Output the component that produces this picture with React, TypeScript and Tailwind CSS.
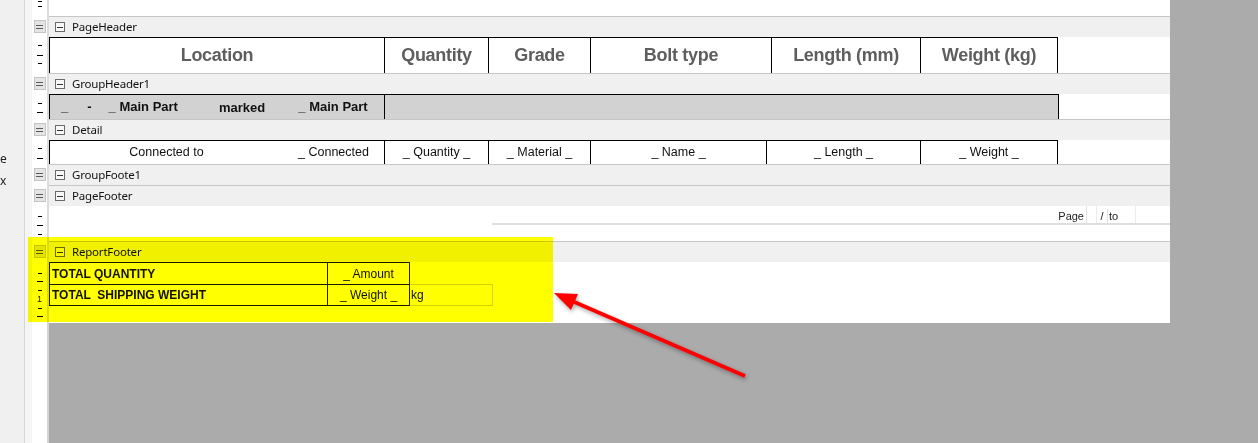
import clsx from 'clsx';
import type { ReactNode } from 'react';

type Tick = { top: number; kind: 'short' | 'long' | 'label' };

function Ruler({ ticks = [] }: { ticks?: Tick[] }) {
  return (
    <div className="relative w-[15px] shrink-0 bg-white">
      {ticks.map((t, i) =>
        t.kind === 'label' ? (
          <span
            key={i}
            className="absolute left-[5px] text-[9px] leading-none text-[#222]"
            style={{ top: t.top - 4 }}
          >
            1
          </span>
        ) : (
          <div
            key={i}
            className={clsx(
              'absolute h-px bg-black',
              t.kind === 'short' ? 'left-[6px] w-[4px]' : 'left-[5px] w-[6px]',
            )}
            style={{ top: t.top }}
          />
        ),
      )}
    </div>
  );
}

function BandBody({
  height,
  ticks,
  children,
}: {
  height: string;
  ticks?: Tick[];
  children?: ReactNode;
}) {
  return (
    <div className={clsx('flex shrink-0', height)}>
      <Ruler ticks={ticks} />
      <div className="w-[2px] shrink-0 bg-[#dcdcdc]" />
      <div className="relative w-[1121px] shrink-0 bg-white">{children}</div>
    </div>
  );
}

function BandHeader({ label }: { label: string }) {
  return (
    <div className="flex h-[21px] shrink-0">
      <div className="flex w-[15px] shrink-0 items-center justify-center bg-white">
        <div className="flex h-[13px] w-[12px] flex-col items-center justify-center gap-[2px] border border-[#c4c4c4] bg-[#e4e4e4]">
          <div className="h-px w-[7px] bg-[#5a5a5a]" />
          <div className="h-px w-[7px] bg-[#5a5a5a]" />
        </div>
      </div>
      <div className="w-[2px] shrink-0 bg-[#dcdcdc]" />
      <div className="flex w-[1121px] shrink-0 items-center border-t border-[#c6c6c6] bg-[#f0f0f0] pl-[6px]">
        <div className="flex h-[10px] w-[10px] items-center justify-center border border-[#6a6a6a] bg-[#f7f7f7]">
          <div className="h-px w-[6px] bg-[#333]" />
        </div>
        <span className="ml-[7px] font-['Noto_Sans',sans-serif] text-[11.5px] leading-none tracking-[-0.2px] text-[#111]">
          {label}
        </span>
      </div>
    </div>
  );
}

const headerCols = [
  { label: 'Location', w: 'w-[335px]' },
  { label: 'Quantity', w: 'w-[104px]' },
  { label: 'Grade', w: 'w-[102px]' },
  { label: 'Bolt type', w: 'w-[181px]' },
  { label: 'Length (mm)', w: 'w-[149px]' },
  { label: 'Weight (kg)', w: 'w-[138px] border-r' },
];

const detailCols = [
  { label: '_ Quantity _', w: 'w-[104px]' },
  { label: '_ Material _', w: 'w-[102px]' },
  { label: '_ Name _', w: 'w-[176px]' },
  { label: '_ Length _', w: 'w-[154px]' },
  { label: '_ Weight _', w: 'w-[138px] border-r' },
];

export default function App() {
  return (
    <div className="relative flex h-[443px] w-[1258px] overflow-hidden bg-[#ababab] font-['Liberation_Sans',Arial,sans-serif] text-black">
      {/* properties panel edge */}
      <div className="flex h-full w-[32px] shrink-0">
        <div className="w-[24px] overflow-hidden bg-[#f0f0f0] pt-[148px] font-['Noto_Sans',sans-serif] text-[12px] leading-[22px] text-[#222]">
          <div>e</div>
          <div>x</div>
        </div>
        <div className="w-px bg-[#d6d6d6]" />
        <div className="w-[7px] bg-[#f5f5f5]" />
      </div>

      <div className="flex w-[1138px] shrink-0 flex-col">
        <BandBody
          height="h-[16px]"
          ticks={[
            { top: 1, kind: 'short' },
            { top: 6, kind: 'short' },
          ]}
        />

        <BandHeader label="PageHeader" />
        <BandBody
          height="h-[36px]"
          ticks={[
            { top: 8, kind: 'short' },
            { top: 18, kind: 'long' },
            { top: 26, kind: 'short' },
          ]}
        >
          <div className="flex h-full">
            {headerCols.map((c) => (
              <div
                key={c.label}
                className={clsx(
                  'flex h-full items-center justify-center border-l border-t border-black pb-px text-[18px] font-bold tracking-[-0.3px] text-[#5e5e5e]',
                  c.w,
                )}
              >
                {c.label}
              </div>
            ))}
          </div>
        </BandBody>

        <BandHeader label="GroupHeader1" />
        <BandBody
          height="h-[25px]"
          ticks={[
            { top: 9, kind: 'short' },
            { top: 18, kind: 'long' },
          ]}
        >
          <div className="flex h-full text-[13px] font-bold text-[#111]">
            <div className="flex h-full w-[233px] items-center border-l border-t border-black bg-[#d2d2d2] pl-[11px]">
              <span>_</span>
              <span className="ml-[19px]">-</span>
              <span className="ml-[17px]">_ Main Part</span>
              <span className="ml-[41px] mt-[2px]">marked</span>
            </div>
            <div className="flex h-full w-[102px] items-center justify-center border-t border-black bg-[#d2d2d2]">
              _ Main Part
            </div>
            <div className="h-full w-[675px] border-x border-t border-black bg-[#d2d2d2]" />
          </div>
        </BandBody>

        <BandHeader label="Detail" />
        <BandBody
          height="h-[24px]"
          ticks={[
            { top: 8, kind: 'short' },
            { top: 18, kind: 'long' },
          ]}
        >
          <div className="flex h-full text-[12.5px] text-[#111]">
            <div className="flex h-full w-[335px] border-l border-t border-black">
              <div className="flex w-[233px] items-center justify-center">Connected to</div>
              <div className="flex w-[101px] items-center justify-center">_ Connected</div>
            </div>
            {detailCols.map((c) => (
              <div
                key={c.label}
                className={clsx(
                  'flex h-full items-center justify-center border-l border-t border-black',
                  c.w,
                )}
              >
                {c.label}
              </div>
            ))}
          </div>
        </BandBody>

        <BandHeader label="GroupFoote1" />
        <BandHeader label="PageFooter" />
        <BandBody
          height="h-[35px]"
          ticks={[
            { top: 10, kind: 'short' },
            { top: 19, kind: 'long' },
            { top: 28, kind: 'short' },
          ]}
        >
          <div className="ml-[443px] flex h-[19px] border-b-2 border-[#dedede] text-[11px] text-[#222]">
            <div className="flex w-[595px] items-center justify-end overflow-hidden border-r border-[#e2e2e2] pr-[2px] pt-[3px]">
              <span>Page</span>
            </div>
            <div className="ml-[9px] flex w-[40px] border-x border-[#ececec] pt-[3px]">
              <div className="flex w-[11px] items-center justify-center border-r border-[#e2e2e2]">/</div>
              <div className="flex items-center pl-[1px]">to</div>
            </div>
          </div>
        </BandBody>

        <BandHeader label="ReportFooter" />
        <BandBody
          height="h-[61px]"
          ticks={[
            { top: 11, kind: 'short' },
            { top: 19, kind: 'long' },
            { top: 28, kind: 'short' },
            { top: 37, kind: 'label' },
            { top: 46, kind: 'short' },
            { top: 54, kind: 'long' },
          ]}
        >
          <div className="flex flex-col text-[12px] text-[#111]">
            <div className="flex h-[22px]">
              <div className="flex w-[278px] items-center border-l border-t border-[#1a1a1a] pl-[2px] font-bold">
                TOTAL QUANTITY
              </div>
              <div className="flex w-[83px] items-center justify-center border-x border-t border-[#1a1a1a]">
                _ Amount
              </div>
            </div>
            <div className="flex h-[22px]">
              <div className="flex w-[278px] items-center whitespace-pre border-y border-l border-[#1a1a1a] pl-[2px] font-bold">
                {'TOTAL  SHIPPING WEIGHT'}
              </div>
              <div className="flex w-[83px] items-center justify-center border border-[#1a1a1a]">
                _ Weight _
              </div>
              <div className="flex w-[83px] items-center border-y border-r border-[#d4d4d4] pl-px">
                kg
              </div>
            </div>
          </div>
        </BandBody>

        <div className="flex flex-1">
          <div className="w-[15px] bg-white" />
          <div className="w-[2px] bg-[#d4d4d4]" />
        </div>
      </div>

      {/* highlighter mark over the report footer */}
      <div className="pointer-events-none absolute left-[28px] top-[237px] h-[85px] w-[525px] bg-[#ffff00] mix-blend-multiply" />

      {/* annotation arrow */}
      <svg
        className="pointer-events-none absolute left-0 top-0 drop-shadow-[1px_2px_2px_rgba(0,0,0,0.35)]"
        width={1258}
        height={443}
        viewBox="0 0 1258 443"
      >
        <line x1={745} y1={376} x2={572} y2={301} stroke="#ff0000" strokeWidth={4} />
        <polygon points="554,293 578,294 571,310" fill="#ff0000" />
      </svg>
    </div>
  );
}
